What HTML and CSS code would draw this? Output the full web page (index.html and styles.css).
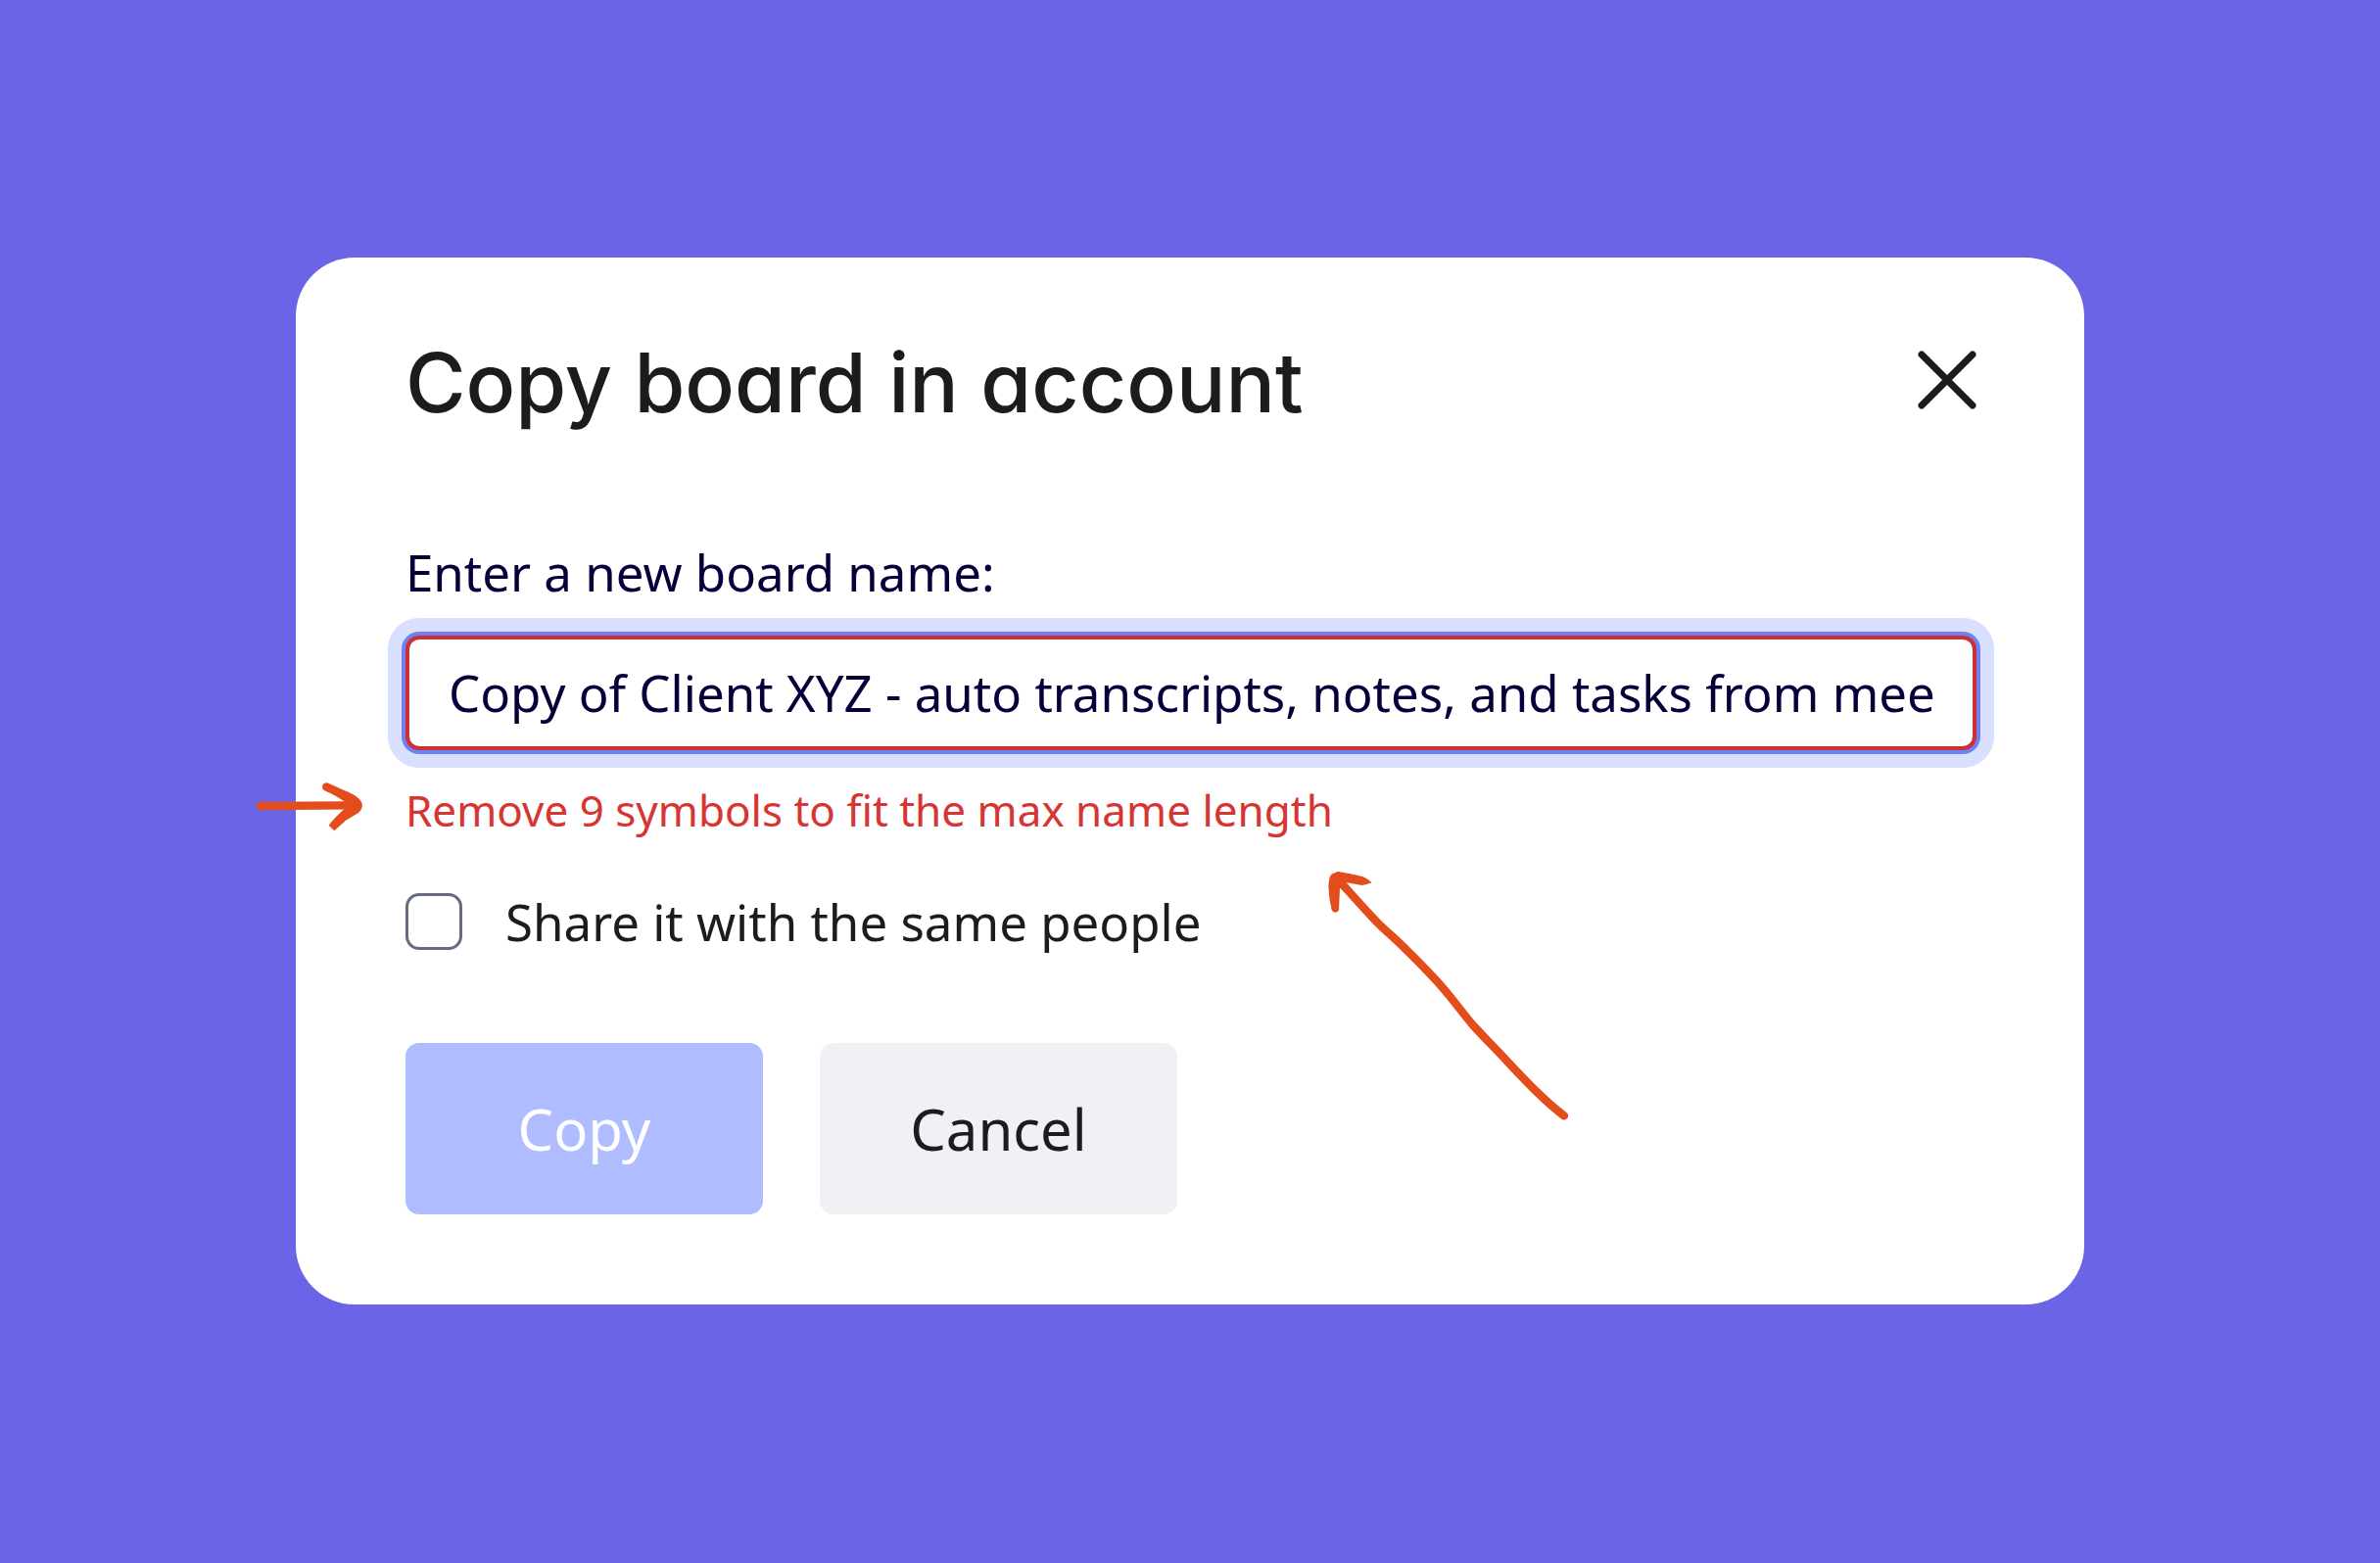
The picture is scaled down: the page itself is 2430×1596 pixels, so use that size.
FILE: index.html
```html
<!DOCTYPE html>
<html lang="en">

<head>
    <meta charset="UTF-8">
    <meta name="viewport" content="width=device-width, initial-scale=1.0">
    <title>Copy board in account</title>
    <link rel="stylesheet" href="styles.css">
</head>

<body>

    <form class="modal" role="dialog" aria-labelledby="modalTitle">
        <div class="modal-header">
            <h1 id="modalTitle">Copy board in account</h1>
            <button type="button" class="close-button" aria-label="Close">
                <svg viewBox="0 0 60 60" width="60" height="60">
                    <path d="M4 4L56 56M56 4L4 56" />
                </svg>
            </button>
        </div>

        <label class="name-label" for="boardName">Enter a new board name:</label>
        <input type="text" id="boardName" class="name-input" value="Copy of Client XYZ - auto transcripts, notes, and tasks from mee" aria-describedby="nameError">

        <div class="error-row">
            <p id="nameError" class="error-text">Remove 9 symbols to fit the max name length</p>

            <!-- Hand drawn arrows pointing at the error -->
            <svg class="arrow arrow-left" viewBox="0 0 420 270" aria-hidden="true">
                <path class="arrow-line" d="M48 129L320 127" />
                <path class="arrow-head" d="M256 59L304 81Q338 94 350 107Q360 117 360 127Q359 141 348 150Q324 164 308 174Q297 184 274 205L257 188Q274 166 304 139L304 115Q280 98 244 82A12 12 0 0 1 256 59Z" />
            </svg>
            <svg class="arrow arrow-right" viewBox="0 0 900 900" aria-hidden="true">
                <path class="arrow-line" d="M112 88C150 130 192 178 230 217C258 245 290 271 318 300C350 331 378 360 407 391C452 439 482 484 524 533C554 566 590 602 622 636C684 702 740 762 801 808" />
                <path class="arrow-head" d="M110 60Q150 67 184 75Q198 81 212 94Q194 101 182 102L126 92L114 112L111 178A12 12 0 0 1 89 178Q80 140 79 105Q81 82 84 74Q89 65 99 64Q104 60 110 60Z" />
            </svg>
        </div>

        <label class="share-row">
            <input type="checkbox" class="share-checkbox">
            Share it with the same people
        </label>

        <div class="button-row">
            <button type="submit" class="button button-primary" disabled>Copy</button>
            <button type="button" class="button button-secondary">Cancel</button>
        </div>
    </form>

</body>

</html>
```

FILE: styles.css
```css
/* Global Styles */
* {
    box-sizing: border-box;
}

body {
    font-family: "Noto Sans", sans-serif;
    background-color: #6c64e6;
    color: #1c1c1e;
    margin: 0;
    padding: 0 302px 2px;
    display: flex;
    align-items: center;
    min-height: 100vh;
}

/* Modal */
.modal {
    flex: 1;
    display: flex;
    flex-direction: column;
    background-color: #fff;
    border-radius: 60px;
    padding: 78px 110px 92px 112px;
}

.modal-header {
    display: flex;
    justify-content: space-between;
    align-items: center;
    margin-bottom: 108px;
}

h1 {
    font-family: Inter, sans-serif;
    font-size: 84px;
    font-weight: 500;
    line-height: 100px;
    /* Single-storey a */
    font-feature-settings: "cv11";
    margin: 0;
}

.close-button {
    display: flex;
    background: none;
    border: none;
    padding: 0 0 6px;
    cursor: pointer;
}

.close-button svg {
    fill: none;
    stroke: #1c1c1e;
    stroke-width: 7;
    stroke-linecap: round;
}

/* Board Name */
.name-label {
    font-size: 51px;
    line-height: 70px;
    color: #05003a;
    margin-bottom: 30px;
}

.name-input {
    width: 100%;
    height: 117px;
    padding: 0 40px;
    font-family: inherit;
    font-size: 51px;
    color: #05003a;
    background-color: #fff;
    border: 4px solid #cc3033;
    border-radius: 14px;
    outline: none;
    box-shadow: 0 0 0 4px #7080f0, 0 0 0 18px #d9dfff;
}

/* Error */
.error-row {
    position: relative;
    margin: 31px 0 55px;
}

.error-text {
    font-size: 44px;
    line-height: 60px;
    color: #d63533;
    margin: 0;
}

.arrow {
    position: absolute;
    pointer-events: none;
}

.arrow-left {
    left: -164px;
    top: -17px;
    width: 140px;
}

.arrow-right {
    left: 916px;
    top: 73px;
    width: 300px;
}

.arrow-line {
    fill: none;
    stroke: #e34d1c;
    stroke-width: 25;
    stroke-linecap: round;
}

.arrow-head {
    fill: #e34d1c;
}

/* Share Checkbox */
.share-row {
    display: flex;
    align-items: center;
    align-self: flex-start;
    gap: 44px;
    font-size: 51px;
    line-height: 58px;
    margin-bottom: 95px;
}

.share-checkbox {
    appearance: none;
    width: 58px;
    height: 58px;
    margin: 0;
    background-color: #fff;
    border: 3px solid #656b81;
    border-radius: 14px;
}

/* Buttons */
.button-row {
    display: flex;
    gap: 58px;
}

.button {
    width: 365px;
    height: 175px;
    font-family: inherit;
    font-size: 58px;
    border: none;
    border-radius: 14px;
    cursor: pointer;
}

.button-primary {
    background-color: #afbcff;
    color: #fff;
}

.button-secondary {
    background-color: #f0f1f5;
    color: #1c1c1e;
}
```
